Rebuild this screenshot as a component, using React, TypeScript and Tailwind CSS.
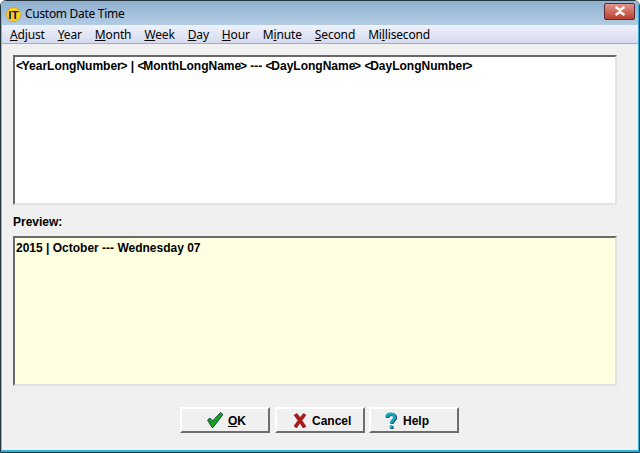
import type { ReactNode } from 'react';

const menus = [
  { pre: '', key: 'A', post: 'djust' },
  { pre: '', key: 'Y', post: 'ear' },
  { pre: '', key: 'M', post: 'onth' },
  { pre: '', key: 'W', post: 'eek' },
  { pre: '', key: 'D', post: 'ay' },
  { pre: '', key: 'H', post: 'our' },
  { pre: 'M', key: 'i', post: 'nute' },
  { pre: '', key: 'S', post: 'econd' },
  { pre: 'Mi', key: 'l', post: 'lisecond' },
];

function Sunken({ bg, children }: { bg: string; children: ReactNode }) {
  return (
    <div className={`h-[150px] border-2 border-t-[#696969] border-l-[#696969] border-r-[#e3e3e3] border-b-[#e3e3e3] pl-[1px] ${bg}`}>
      <div className="font-['Liberation_Sans',sans-serif] text-[12px] leading-[15px] font-bold text-black whitespace-pre">{children}</div>
    </div>
  );
}

// the reference font has narrower angle brackets than Liberation Sans
function Tag({ name }: { name: string }) {
  return <><span className="mr-[-1.3px]">&lt;</span>{name}<span className="ml-[-1.3px]">&gt;</span></>;
}

function DialogButton({ label, underline, className, icon }: { label: string; underline?: boolean; className: string; icon: ReactNode }) {
  return (
    <button className={`w-[90px] h-[26px] flex items-center bg-[#f0f0f0] border-2 border-t-white border-l-white border-r-[#6d6d6d] border-b-[#6d6d6d] font-['Liberation_Sans',sans-serif] text-[12px] font-bold text-black ${className}`}>
      {icon}
      <span className="mt-[2px]">{underline ? <><span className="underline">{label[0]}</span>{label.slice(1)}</> : label}</span>
    </button>
  );
}

export default function App() {
  return (
    <div className="w-[640px] h-[453px] overflow-hidden rounded-t-[6px] border border-[#24343f] bg-[#8fb4d6]">
      <div className="h-full flex flex-col bg-[#f0f0f0] border-l border-l-[#8fb4d6] border-r border-r-[#2fb4e0] border-b-2 border-b-[#2fb4e0]">
        {/* Title bar */}
        <div className="h-[24px] flex items-center bg-gradient-to-b from-[#8fb0cf] to-[#b3cce4] pl-[4px] pr-[3px]">
          <svg width="15" height="15" viewBox="0 0 16 16" className="mt-[2px]">
            <circle cx="8" cy="8" r="7.6" fill="#ffd21a" stroke="#c9960c" strokeWidth="0.7" />
            <text x="8" y="12.500" textAnchor="middle" fontFamily="'Liberation Sans', sans-serif" fontWeight="bold" fontSize="12.500" fill="#14145e">IT</text>
          </svg>
          <span className="ml-[4px] mt-[2px] font-['Noto_Sans',sans-serif] text-[12px] tracking-[-0.3px] text-black">Custom Date Time</span>
          <div className="ml-auto w-[31px] h-[17px] mt-[-4px] flex items-center justify-center rounded-[2px] border border-[#5a2a3a] bg-gradient-to-b from-[#e0958a] to-[#b8402f]">
            <svg width="14" height="10" viewBox="0 0 14 10">
              <path d="M2.500 1l4.500 3 4.500-3M2.500 9l4.500-3 4.500 3" fill="none" stroke="#f4f4f4" strokeWidth="2.400" />
            </svg>
          </div>
        </div>

        {/* Menu bar */}
        <div className="h-[19px] pt-[2px] flex items-center gap-[13px] pl-[8px] bg-gradient-to-b from-[#eff2fa] to-[#d5daee] border-b border-b-[#a9a9bf] font-['Noto_Sans',sans-serif] text-[12px] tracking-[-0.15px] text-black">
          {menus.map(m => (
            <span key={m.key + m.post}>{m.pre}<span className="underline">{m.key}</span>{m.post}</span>
          ))}
        </div>

        {/* Client area */}
        <div className="flex-1 flex flex-col pl-[11px] pr-[21px] pt-[11px]">
          <Sunken bg="bg-white pt-[2px]">
            <Tag name="YearLongNumber" /> | <Tag name="MonthLongName" /> --- <Tag name="DayLongName" /> <Tag name="DayLongNumber" />
          </Sunken>
          <div className="mt-[10px] h-[21px] font-['Liberation_Sans',sans-serif] text-[12px] leading-[15px] font-bold text-black">Preview:</div>
          <Sunken bg="bg-[#ffffe1] pt-[3px]">2015 | October --- Wednesday 07</Sunken>
          <div className="mt-[21px] flex gap-[5px] pl-[167px]">
            <DialogButton label="OK" underline className="pl-[25px] gap-[5px]" icon={
              <svg width="16" height="16" viewBox="0 0 16 16">
                <path d="M0.500 8L3 6l2.500 3 8-8.500L16 2.500 6 15.500H5z" fill="#14a514" stroke="#0a2a50" strokeWidth="0.8" />
              </svg>
            } />
            <DialogButton label="Cancel" className="pl-[16px] gap-[5px]" icon={
              <svg width="14" height="15" viewBox="0 0 14 15">
                <path d="M1 2l3-1.500 3 4 3.500-4L13 2 9 7.500l4 6-3 1.500-3-5-3.500 5L1 13l4-5.500z" fill="#b01818" stroke="#701010" strokeWidth="0.5" />
              </svg>
            } />
            <DialogButton label="Help" className="ml-[-1px] pl-[14px] gap-[6px]" icon={
              <svg width="12" height="17" viewBox="0 0 12 17">
                <path d="M2.500 6C2.500 3.500 4.500 2.500 6.500 2.500S10.500 3.500 10.500 6C10.500 8.500 7 8.500 7 12" fill="none" stroke="#0a2a60" strokeWidth="3" />
                <rect x="5.500" y="14" width="3" height="3" fill="#0a2a60" />
                <path d="M1.700 5.500C1.700 3 3.700 2 5.700 2S9.700 3 9.700 5.500C9.700 8 6.200 8 6.200 11.500" fill="none" stroke="#12a8b8" strokeWidth="3" />
                <rect x="4.700" y="13.300" width="3" height="3" fill="#12a8b8" />
              </svg>
            } />
          </div>
        </div>
      </div>
    </div>
  );
}
